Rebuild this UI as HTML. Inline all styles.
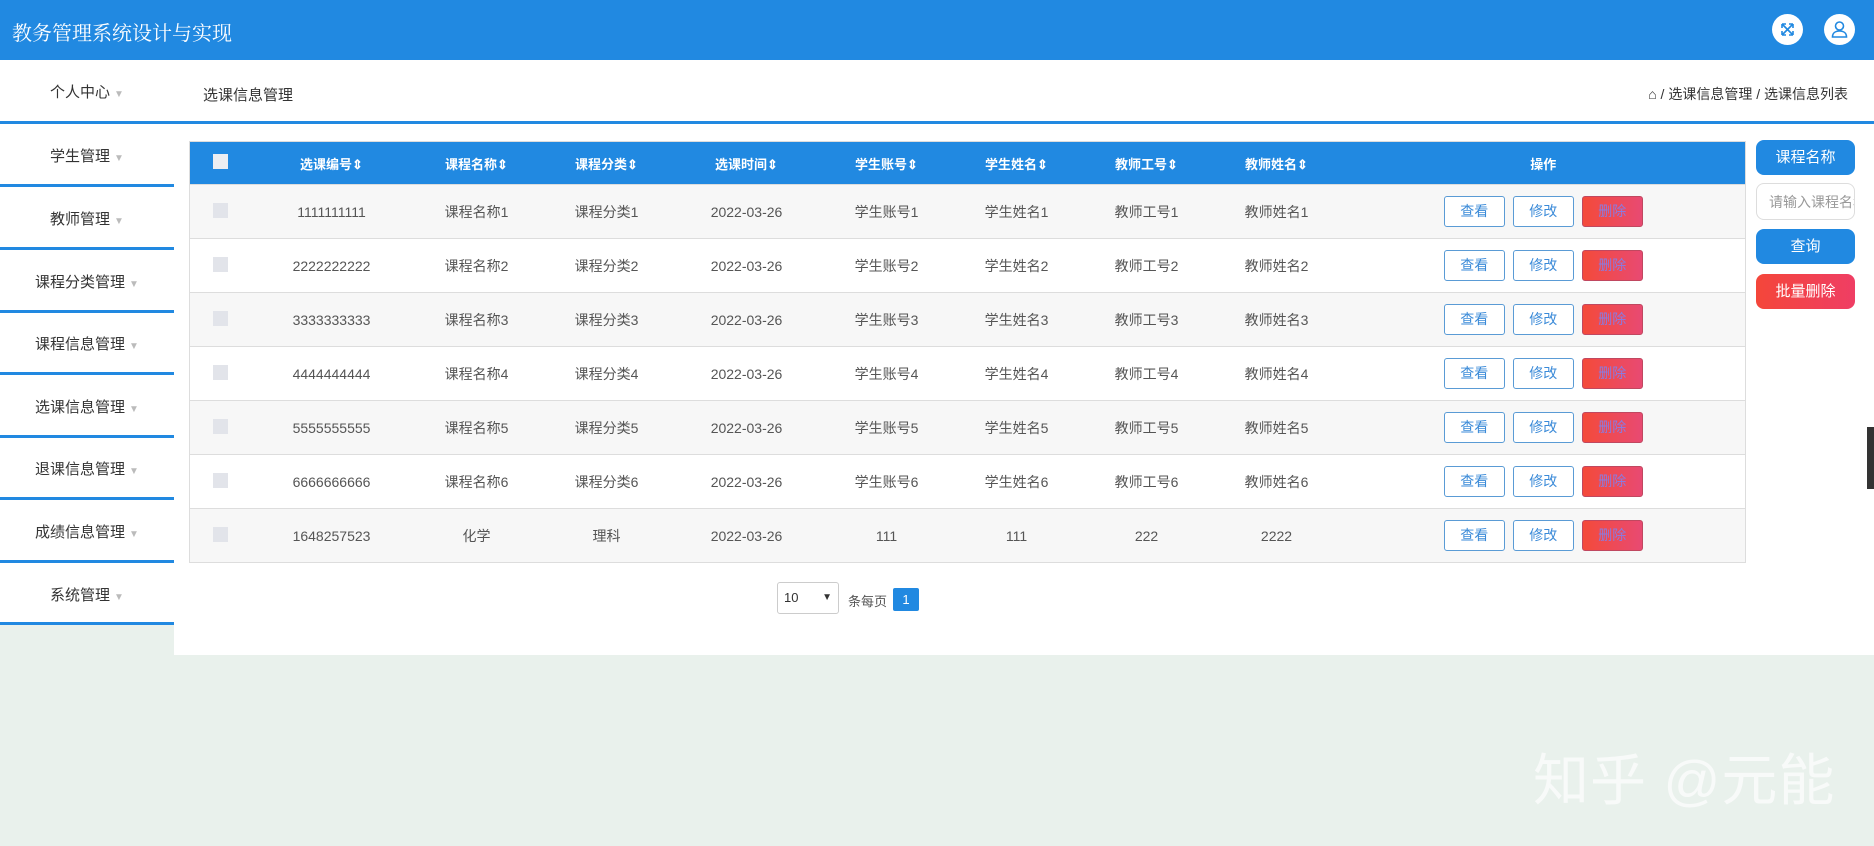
<!DOCTYPE html>
<html><head><meta charset="utf-8"><style>
*{margin:0;padding:0;box-sizing:border-box}
body{width:1874px;height:846px;background:#e9f1ec;font-family:"Liberation Sans","Noto Sans CJK SC",sans-serif;position:relative;overflow:hidden;color:#444}
.hd{position:absolute;left:0;top:0;width:1874px;height:60px;background:#2189e1}
.hd .t{position:absolute;left:12px;top:17px;color:#fff;font-size:20px;font-family:"Liberation Serif","Noto Serif CJK SC",serif}
.ic{position:absolute;top:14px;width:31px;height:31px;border-radius:50%;background:#fff}
.side{position:absolute;left:0;top:60px;width:174px;height:565px;background:#fff}
.si{position:absolute;left:0;width:174px;text-align:center;font-size:15px;color:#333}
.si span{color:#bbb;font-size:10px;margin-left:4px}
.ln{position:absolute;left:0;width:174px;height:3px;background:#2189e1}
.main{position:absolute;left:174px;top:60px;width:1700px;height:595px;background:#fff}
.bc{position:absolute;left:203px;top:84px;font-size:15px;color:#333}
.bcr{position:absolute;right:26px;top:84px;font-size:14px;color:#333}
table{position:absolute;left:189px;top:141px;width:1557px;border-collapse:collapse;font-size:14px}
th{background:#2189e1;color:#fff;height:43px;font-weight:bold;font-size:13px}
td{height:54px;text-align:center;color:#555;border-top:1px solid #ddd}
tr.o td{background:#f7f7f7}
table{border:1px solid #ddd}
.cb{display:inline-block;width:15px;height:15px;background:#e2e4ea}
th .cb{background:#eceef2}
.b{display:inline-block;width:61px;height:31px;line-height:29px;border:1px solid #5a9bd5;border-radius:3px;color:#3a8ad8;font-size:14px;margin:0 4px;background:#fff;vertical-align:middle}
.b.d{background:linear-gradient(90deg,#f44a3a,#e84a72);color:#8a7be0;border-color:#c04860}
.rb{position:absolute;left:1756px;width:99px;border-radius:8px;color:#fff;text-align:center;font-size:15px}
.pg{position:absolute;top:582px}
.wm{position:absolute;left:1533px;top:736px;font-size:56px;color:#f8faf9;letter-spacing:1px}
</style></head><body>
<div class="hd"><div class="t">教务管理系统设计与实现</div>
<div class="ic" style="left:1772px"><svg width="31" height="31" viewBox="0 0 31 31" fill="none" stroke="#2189e1" stroke-width="1.6"><path d="M10 10l11 11M21 10L10 21M10 10h4M10 10v4M21 21h-4M21 21v-4M21 10h-4M21 10v4M10 21h4M10 21v-4"/></svg></div>
<div class="ic" style="left:1824px"><svg width="31" height="31" viewBox="0 0 31 31" fill="none" stroke="#2189e1" stroke-width="1.6"><circle cx="15.5" cy="12" r="4"/><path d="M8.5 23c0-4 3-6 7-6s7 2 7 6z"/></svg></div>
</div>
<div class="side">
<div class="si" style="top:21px">个人中心<span>▼</span></div>
<div class="si" style="top:85px">学生管理<span>▼</span></div><div class="ln" style="top:124px"></div>
<div class="si" style="top:148px">教师管理<span>▼</span></div><div class="ln" style="top:187px"></div>
<div class="si" style="top:211px">课程分类管理<span>▼</span></div><div class="ln" style="top:250px"></div>
<div class="si" style="top:273px">课程信息管理<span>▼</span></div><div class="ln" style="top:312px"></div>
<div class="si" style="top:336px">选课信息管理<span>▼</span></div><div class="ln" style="top:375px"></div>
<div class="si" style="top:398px">退课信息管理<span>▼</span></div><div class="ln" style="top:437px"></div>
<div class="si" style="top:461px">成绩信息管理<span>▼</span></div><div class="ln" style="top:500px"></div>
<div class="si" style="top:524px">系统管理<span>▼</span></div><div class="ln" style="top:562px"></div>
</div>
<div class="main"></div>
<div class="bc">选课信息管理</div>
<div class="bcr">⌂ / 选课信息管理 / 选课信息列表</div>
<div style="position:absolute;left:0;top:121px;width:1874px;height:3px;background:#2189e1"></div>
<table>
<colgroup><col style="width:62px"><col style="width:160px"><col style="width:130px"><col style="width:130px"><col style="width:150px"><col style="width:130px"><col style="width:130px"><col style="width:130px"><col style="width:130px"><col></colgroup>
<tr><th><span class="cb"></span></th><th>选课编号⇕</th><th>课程名称⇕</th><th>课程分类⇕</th><th>选课时间⇕</th><th>学生账号⇕</th><th>学生姓名⇕</th><th>教师工号⇕</th><th>教师姓名⇕</th><th>操作</th></tr>
<tr class="o"><td><span class="cb"></span></td><td>1111111111</td><td>课程名称1</td><td>课程分类1</td><td>2022-03-26</td><td>学生账号1</td><td>学生姓名1</td><td>教师工号1</td><td>教师姓名1</td><td><span class="b">查看</span><span class="b">修改</span><span class="b d">删除</span></td></tr>
<tr><td><span class="cb"></span></td><td>2222222222</td><td>课程名称2</td><td>课程分类2</td><td>2022-03-26</td><td>学生账号2</td><td>学生姓名2</td><td>教师工号2</td><td>教师姓名2</td><td><span class="b">查看</span><span class="b">修改</span><span class="b d">删除</span></td></tr>
<tr class="o"><td><span class="cb"></span></td><td>3333333333</td><td>课程名称3</td><td>课程分类3</td><td>2022-03-26</td><td>学生账号3</td><td>学生姓名3</td><td>教师工号3</td><td>教师姓名3</td><td><span class="b">查看</span><span class="b">修改</span><span class="b d">删除</span></td></tr>
<tr><td><span class="cb"></span></td><td>4444444444</td><td>课程名称4</td><td>课程分类4</td><td>2022-03-26</td><td>学生账号4</td><td>学生姓名4</td><td>教师工号4</td><td>教师姓名4</td><td><span class="b">查看</span><span class="b">修改</span><span class="b d">删除</span></td></tr>
<tr class="o"><td><span class="cb"></span></td><td>5555555555</td><td>课程名称5</td><td>课程分类5</td><td>2022-03-26</td><td>学生账号5</td><td>学生姓名5</td><td>教师工号5</td><td>教师姓名5</td><td><span class="b">查看</span><span class="b">修改</span><span class="b d">删除</span></td></tr>
<tr><td><span class="cb"></span></td><td>6666666666</td><td>课程名称6</td><td>课程分类6</td><td>2022-03-26</td><td>学生账号6</td><td>学生姓名6</td><td>教师工号6</td><td>教师姓名6</td><td><span class="b">查看</span><span class="b">修改</span><span class="b d">删除</span></td></tr>
<tr class="o"><td><span class="cb"></span></td><td>1648257523</td><td>化学</td><td>理科</td><td>2022-03-26</td><td>111</td><td>111</td><td>222</td><td>2222</td><td><span class="b">查看</span><span class="b">修改</span><span class="b d">删除</span></td></tr>
</table>
<div class="rb" style="top:140px;height:35px;line-height:35px;background:#2189e1">课程名称</div>
<div class="rb" style="top:183px;height:37px;line-height:37px;background:#fff;border:1px solid #ddd;color:#999;font-size:14px;text-align:left;padding-left:12px;overflow:hidden;white-space:nowrap">请输入课程名称</div>
<div class="rb" style="top:229px;height:35px;line-height:35px;background:#2189e1">查询</div>
<div class="rb" style="top:274px;height:35px;line-height:35px;background:linear-gradient(90deg,#f4463a,#ef3e64)">批量删除</div>
<div class="pg" style="left:777px;width:62px;height:32px;border:1px solid #ccc;border-radius:3px;background:#fff;font-size:13px;line-height:30px;padding-left:6px;color:#333">10<span style="position:absolute;right:6px;font-size:10px">▼</span></div>
<div class="pg" style="left:848px;top:591px;font-size:13px;color:#555">条每页</div>
<div class="pg" style="left:893px;top:588px;width:26px;height:23px;background:#2189e1;color:#fff;font-size:13px;text-align:center;line-height:23px;border-radius:2px">1</div>
<div style="position:absolute;left:1867px;top:427px;width:7px;height:62px;background:#333"></div>
<div class="wm">知乎 @元能</div>
</body></html>
